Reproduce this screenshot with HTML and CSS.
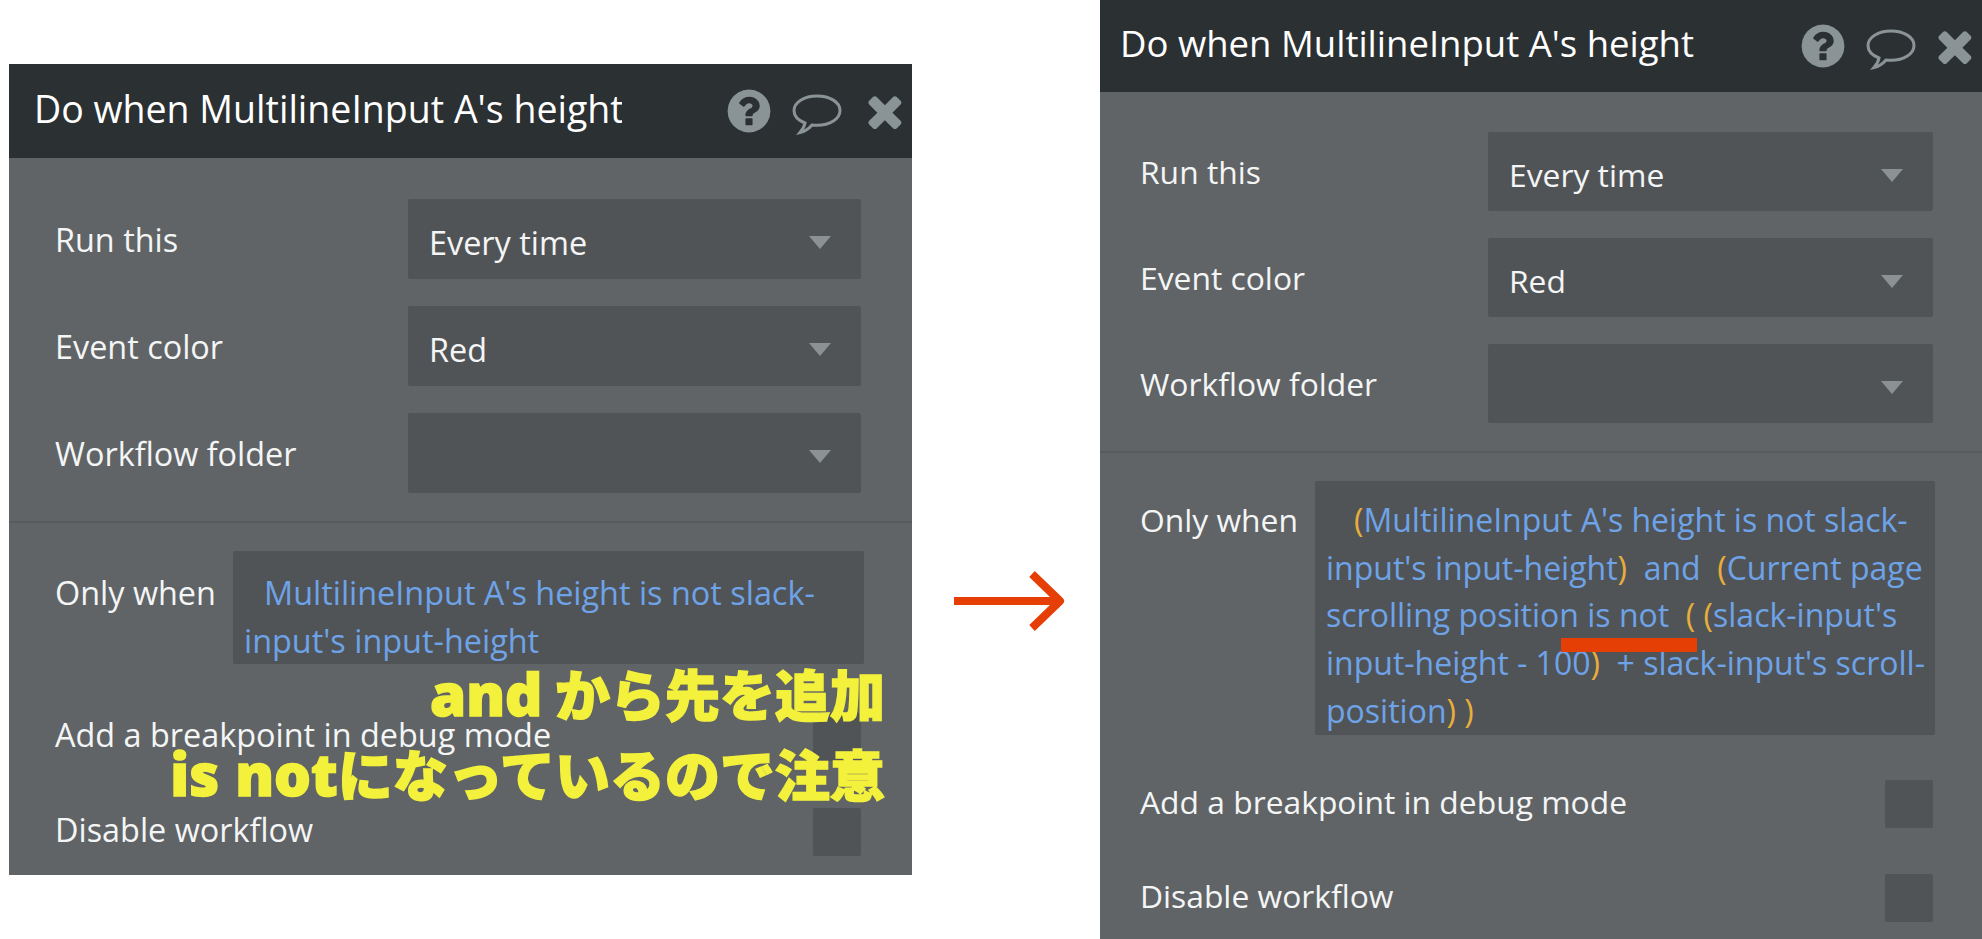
FILE: index.html
```html
<!DOCTYPE html>
<html lang="ja">
<head>
    <meta charset="UTF-8">
    <meta name="viewport" content="width=device-width, initial-scale=1.0">
    <title>Only when</title>
    <link rel="stylesheet" href="styles.css">
</head>
<body>
    <div class="page">
        <!-- before -->
        <div class="panel panel-a">
            <div class="panel-head">
                <div class="panel-title">Do when MultilineInput A's height</div>
                <svg class="icon icon-help" viewBox="0 0 1792 1792"><path d="M1024 1376v-192q0-14-9-23t-23-9h-192q-14 0-23 9t-9 23v192q0 14 9 23t23 9h192q14 0 23-9t9-23zm256-672q0-88-55.5-163t-138.5-116-170-41q-243 0-371 213-15 24 8 42l132 100q7 6 19 6 16 0 25-12 53-68 86-92 34-24 86-24 48 0 85.5 26t37.5 59q0 38-20 61t-68 45q-63 28-115.5 86.5t-52.5 125.5v36q0 14 9 23t23 9h192q14 0 23-9t9-23q0-19 21.5-49.5t54.5-49.5q32-18 49-28.5t46-35 44.5-48 28-60.5 12.5-81zm384 192q0 209-103 385.5t-279.5 279.5-385.5 103-385.5-103-279.5-279.5-103-385.5 103-385.5 279.5-279.5 385.5-103 385.5 103 279.5 279.5 103 385.5z"/></svg>
                <svg class="icon icon-comment" viewBox="0 0 50 42"><path d="M25 2C12 2 2 8.5 2 16.5c0 5.5 4.5 10 11 12.5-.5 3-2 6-5 9.5 4.5-1 9-4 12-7.5 1.5.2 3.5.3 5 .3 13 0 23-6.500 23-14.800S38 2 25 2z"/></svg>
                <svg class="icon icon-close" viewBox="300 250 1200 1300"><path d="M1490 1322q0 40-28 68l-136 136q-28 28-68 28t-68-28l-294-294-294 294q-28 28-68 28t-68-28l-136-136q-28-28-28-68t28-68l294-294-294-294q-28-28-28-68t28-68l136-136q28-28 68-28t68 28l294 294 294-294q28-28 68-28t68 28l136 136q28 28 28 68t-28 68l-294 294 294 294q28 28 28 68z"/></svg>
            </div>
            <div class="panel-body">
                <div class="row"><span class="label">Run this</span><div class="select">Every time<i class="caret"></i></div></div>
                <div class="row"><span class="label">Event color</span><div class="select">Red<i class="caret"></i></div></div>
                <div class="row"><span class="label">Workflow folder</span><div class="select"><i class="caret"></i></div></div>
                <div class="divider"></div>
                <div class="row row-cond">
                    <span class="label">Only when</span>
                    <div class="expr">MultilineInput A's height is not slack-input's input-height</div>
                </div>
                <div class="row row-check"><span class="label">Add a breakpoint in debug mode</span><div class="check"></div></div>
                <div class="row row-check"><span class="label">Disable workflow</span><div class="check"></div></div>
            </div>
            <div class="note">
                <div><span class="note-latin">and</span> から先を追加</div>
                <div><span class="note-latin">is not</span>になっているので注意</div>
            </div>
        </div>

        <svg class="arrow" viewBox="0 0 112 62"><path d="M0 31H106M78 4l28 27-28 27"/></svg>

        <!-- after -->
        <div class="panel panel-b">
            <div class="panel-head">
                <div class="panel-title">Do when MultilineInput A's height</div>
                <svg class="icon icon-help" viewBox="0 0 1792 1792"><path d="M1024 1376v-192q0-14-9-23t-23-9h-192q-14 0-23 9t-9 23v192q0 14 9 23t23 9h192q14 0 23-9t9-23zm256-672q0-88-55.5-163t-138.5-116-170-41q-243 0-371 213-15 24 8 42l132 100q7 6 19 6 16 0 25-12 53-68 86-92 34-24 86-24 48 0 85.5 26t37.5 59q0 38-20 61t-68 45q-63 28-115.5 86.5t-52.5 125.5v36q0 14 9 23t23 9h192q14 0 23-9t9-23q0-19 21.5-49.5t54.5-49.5q32-18 49-28.5t46-35 44.5-48 28-60.5 12.5-81zm384 192q0 209-103 385.5t-279.5 279.5-385.5 103-385.5-103-279.5-279.5-103-385.5 103-385.5 279.5-279.5 385.5-103 385.5 103 279.5 279.5 103 385.5z"/></svg>
                <svg class="icon icon-comment" viewBox="0 0 50 42"><path d="M25 2C12 2 2 8.5 2 16.5c0 5.5 4.5 10 11 12.5-.5 3-2 6-5 9.5 4.5-1 9-4 12-7.5 1.5.2 3.5.3 5 .3 13 0 23-6.500 23-14.800S38 2 25 2z"/></svg>
                <svg class="icon icon-close" viewBox="300 250 1200 1300"><path d="M1490 1322q0 40-28 68l-136 136q-28 28-68 28t-68-28l-294-294-294 294q-28 28-68 28t-68-28l-136-136q-28-28-28-68t28-68l294-294-294-294q-28-28-28-68t28-68l136-136q28-28 68-28t68 28l294 294 294-294q28-28 68-28t68 28l136 136q28 28 28 68t-28 68l-294 294 294 294q28 28 28 68z"/></svg>
            </div>
            <div class="panel-body">
                <div class="row"><span class="label">Run this</span><div class="select">Every time<i class="caret"></i></div></div>
                <div class="row"><span class="label">Event color</span><div class="select">Red<i class="caret"></i></div></div>
                <div class="row"><span class="label">Workflow folder</span><div class="select"><i class="caret"></i></div></div>
                <div class="divider"></div>
                <div class="row row-cond">
                    <span class="label">Only when</span>
                    <div class="expr"><b>(</b>MultilineInput A's height is not slack-input's input-height<b>)</b>  and  <b>(</b>Current page scrolling position is not  <b>(</b> <b>(</b>slack-input's input-height - 100<b>)</b>  + slack-input's scroll-position<b>)</b> <b>)</b><i class="mark"></i></div>
                </div>
                <div class="row row-check"><span class="label">Add a breakpoint in debug mode</span><div class="check"></div></div>
                <div class="row row-check"><span class="label">Disable workflow</span><div class="check"></div></div>
            </div>
        </div>
    </div>
</body>
</html>
```

FILE: styles.css
```css
* {
    box-sizing: border-box;
}

body {
    margin: 0;
    background-color: #ffffff;
    font-family: 'Open Sans', sans-serif;
}

.page {
    display: flex;
    align-items: flex-start;
    width: 1982px;
    height: 939px;
    overflow: hidden;
}

.panel {
    position: relative;
    flex-shrink: 0;
    background-color: #606467;
    color: #f4f5f5;
}

.panel-a {
    --head-h: 94px;
    --font: 32.4px;
    --title-font: 37.5px;
    --select-h: 80px;
    --select-w: 453px;
    --gap: 27px;
    width: 903px;
    height: 811px;
    margin: 64px 0 0 9px;
}

.panel-b {
    --head-h: 92px;
    --font: 31.8px;
    --title-font: 36.5px;
    --select-h: 79px;
    --select-w: 445px;
    --gap: 27px;
    width: 882px;
    height: 939px;
    margin-left: 34px;
}

.panel-head {
    display: flex;
    align-items: center;
    height: var(--head-h);
    padding-left: 25px;
    background-color: #2b3033;
}

.panel-title {
    width: 588px;
    margin-top: -5px;
    overflow: hidden;
    white-space: nowrap;
    font-size: var(--title-font);
    color: #ffffff;
}

.icon {
    flex-shrink: 0;
    fill: #8a9497;
}

.icon-help {
    width: 50px;
    height: 50px;
    margin-left: 102px;
}

.icon-comment {
    width: 50px;
    height: 42px;
    margin: 8px 0 0 18px;
    fill: none;
    stroke: #8a9497;
    stroke-width: 3;
}

.icon-close {
    width: 34px;
    height: 36px;
    margin-left: 26px;
}

.panel-body {
    padding-top: 41px;
}

.row {
    display: flex;
    align-items: center;
    justify-content: space-between;
    margin-bottom: var(--gap);
    padding: 0 51px 0 46px;
    font-size: var(--font);
}

.label {
    white-space: nowrap;
}

.select {
    position: relative;
    width: var(--select-w);
    height: var(--select-h);
    padding: 3px 0 0 21px;
    border-radius: 2px;
    background-color: #515457;
    line-height: var(--select-h);
}

.caret {
    position: absolute;
    top: 37px;
    right: 30px;
    border-top: 13px solid #8c9194;
    border-left: 11px solid transparent;
    border-right: 11px solid transparent;
}

.divider {
    height: 2px;
    margin: 28px 0 28px;
    background-color: #585b5e;
}

.row-cond {
    align-items: baseline;
    margin-bottom: 48px;
    padding-right: 48px;
}

.expr {
    position: relative;
    width: 631px;
    padding: 17px 4px 0 11px;
    border-radius: 2px;
    background-color: #515457;
    color: #6ea3e8;
    line-height: 48px;
    text-indent: 20px;
    white-space: pre-wrap;
}

.expr b {
    font-weight: 400;
    color: #e8ae3c;
}

.row-check {
    margin-bottom: 45px;
}

.row-check .label {
    margin-bottom: 6px;
}

.check {
    width: 48px;
    height: 48px;
    border-radius: 2px;
    background-color: #515457;
}

/* yellow annotation over the form */
.note {
    position: absolute;
    top: 588px;
    right: 27px;
    text-align: right;
    font-family: 'Noto Sans CJK JP', sans-serif;
    font-size: 55px;
    font-weight: 900;
    line-height: 80px;
    white-space: nowrap;
    color: #f4f13c;
    -webkit-text-stroke: 1.5px #f4f13c;
}

.note-latin {
    font-family: 'Open Sans', sans-serif;
    font-size: 58px;
    font-weight: 800;
    line-height: 1;
    word-spacing: 1px;
}

.arrow {
    flex-shrink: 0;
    width: 112px;
    height: 62px;
    margin: 570px 0 0 42px;
    fill: none;
    stroke: #e63f05;
    stroke-width: 8;
    stroke-linejoin: round;
}

/* panel b sits a bit tighter than panel a */
.panel-b .panel-body {
    padding-top: 40px;
}

.panel-b .row {
    padding: 0 49px 0 40px;
}

.panel-b .row-cond {
    margin-bottom: 45px;
}

.panel-b .panel-head {
    padding-left: 20px;
}

.panel-b .panel-title {
    width: 576px;
    margin-top: -6px;
}

.panel-b .icon-close {
    margin-left: 22px;
}

.panel-b .expr {
    width: 620px;
    margin-right: -2px;
    padding-top: 15px;
    font-size: 32px;
    line-height: 47.7px;
    text-indent: 28px;
}

.mark {
    position: absolute;
    top: 157px;
    left: 246px;
    width: 136px;
    height: 14px;
    background-color: #e63f05;
}
```
